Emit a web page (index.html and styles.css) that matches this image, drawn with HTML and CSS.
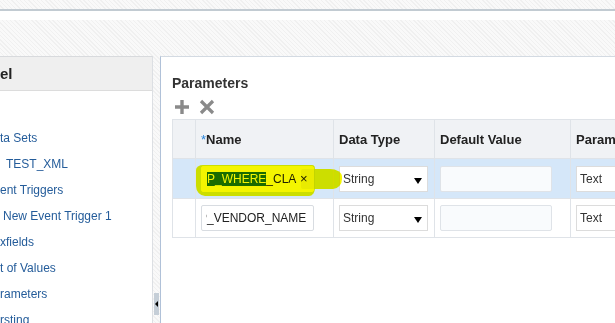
FILE: index.html
```html
<!DOCTYPE html>
<html>
<head lang="en">
    <meta charset="UTF-8">
    <title>Parameters</title>
    <link rel="stylesheet" href="styles.css">
</head>
<body>
<div class="top-bar"></div>
<div class="top-strip"></div>
<div class="main">
    <div class="left-panel">
        <div class="left-head">el</div>
        <ul class="tree">
            <li>ta Sets</li>
            <li class="in-2">TEST_XML</li>
            <li>ent Triggers</li>
            <li class="in-1">New Event Trigger 1</li>
            <li>xfields</li>
            <li>t of Values</li>
            <li>rameters</li>
            <li>rsting</li>
        </ul>
    </div>
    <div class="splitter">
        <span class="handle"><i class="arrow-left"></i></span>
    </div>
    <div class="right-panel">
        <h2 class="title">Parameters</h2>
        <div class="tools">
            <svg width="16" height="16" viewBox="0 0 16 16"><path d="M8 1v14M1 8h14" stroke="#8a8a8a" stroke-width="3.4" fill="none"/></svg>
            <svg width="16" height="16" viewBox="0 0 16 16"><path d="M2 2l12 12M14 2L2 14" stroke="#8a8a8a" stroke-width="3.2" fill="none"/></svg>
        </div>
        <div class="grid">
            <div class="hd"></div>
            <div class="hd"><span class="req">*</span>Name</div>
            <div class="hd">Data Type</div>
            <div class="hd">Default Value</div>
            <div class="hd">Parameter Type</div>

            <div class="cell sel"></div>
            <div class="cell sel mark-cell">
                <div class="field edit">
                    <span class="val"><span class="picked">P_WHERE</span>_CLA</span>
                    <span class="clear">×</span>
                </div>
                <div class="marker"></div>
                <div class="marker tail"></div>
            </div>
            <div class="cell sel"><div class="select">String<i class="arrow-down"></i></div></div>
            <div class="cell sel"><div class="field soft"></div></div>
            <div class="cell sel"><div class="select wide">Text</div></div>

            <div class="cell"></div>
            <div class="cell"><div class="field"><span class="clip"><span class="scroll-end">P_VENDOR_NAME</span></span></div></div>
            <div class="cell"><div class="select">String<i class="arrow-down"></i></div></div>
            <div class="cell"><div class="field soft"></div></div>
            <div class="cell"><div class="select wide">Text</div></div>
        </div>
    </div>
</div>
</body>
</html>
```

FILE: styles.css
```css
*{
    margin:0;
    padding:0;
    box-sizing: border-box;
}
ul{
    list-style: none;
}
body{
    width: 615px;
    height: 323px;
    overflow: hidden;
    background: #fff;
    font-family: "Liberation Sans", Arial, sans-serif;
    color: #333;
}
.top-bar{
    height: 11px;
    border-bottom: 2px solid #c2cbd2;
    background: repeating-linear-gradient(45deg, #f9f9f9 0 2px, #f0f0f0 2px 3px);
}
.top-strip{
    height: 9px;
    background: #fff;
}
.main{
    display: flex;
    height: 303px;
    padding-top: 36px;
    background: repeating-linear-gradient(45deg, #f9f9f9 0 2px, #f0f0f0 2px 3px);
}
.left-panel{
    width: 153px;
    flex: none;
    background: #fff;
    border-top: 1px solid #d8dadd;
    border-right: 1px solid #dcdfe3;
    overflow: hidden;
}
.left-head{
    height: 34px;
    background: #efefef;
    border-bottom: 1px solid #dcdcdc;
    font-size: 15px;
    font-weight: bold;
    line-height: 33px;
    color: #222;
}
.tree{
    padding-top: 34px;
}
.tree li{
    height: 26px;
    line-height: 26px;
    font-size: 12px;
    color: #245c9a;
    white-space: nowrap;
}
.tree .in-1{
    padding-left: 3px;
}
.tree .in-2{
    padding-left: 6px;
}
.splitter{
    width: 7px;
    flex: none;
    display: flex;
    flex-direction: column;
}
.handle{
    width: 5px;
    height: 22px;
    margin: 237px 0 0 1px;
    background: #c5ced7;
    display: flex;
    align-items: center;
}
.arrow-left{
    width: 0;
    height: 0;
    border-top: 3px solid transparent;
    border-bottom: 3px solid transparent;
    border-right: 3px solid #000;
    margin-left: 1px;
}
.right-panel{
    flex: 1;
    background: #fff;
    border-top: 1px solid #d3dae2;
    border-left: 1px solid #b0c1d8;
    padding: 18px 0 0 11px;
    overflow: hidden;
}
.title{
    font-size: 14px;
    line-height: 16px;
    font-weight: bold;
    color: #333;
}
.tools{
    height: 28px;
    padding: 4px 0 0 2px;
    display: flex;
    align-items: center;
    gap: 9px;
}
.tools svg{
    display: block;
}
.grid{
    display: grid;
    grid-template-columns: 23px 138px 101px 136px 130px;
    grid-template-rows: 39px 40px 39px;
    border-top: 1px solid #dfe3e8;
    border-left: 1px solid #dfe3e8;
    width: 528px;
}
.hd, .cell{
    border-right: 1px solid #dfe3e8;
    border-bottom: 1px solid #dfe3e8;
    display: flex;
    align-items: center;
    padding-left: 5px;
    white-space: nowrap;
}
.hd{
    background: #f0f2f5;
    font-size: 13px;
    font-weight: bold;
    color: #222;
}
.hd .req{
    color: #2a86dc;
    font-weight: normal;
}
.cell.sel{
    background: #d5e7f9;
}
.field{
    width: 113px;
    height: 26px;
    border: 1px solid #d8dce1;
    border-radius: 2px;
    background: #fff;
    font-size: 12px;
    display: flex;
    align-items: center;
    overflow: hidden;
    color: #222;
    padding-left: 4px;
}
.field.soft{
    width: 112px;
    background: #f9fbfd;
    border-color: #dfe3e8;
}
.clip{
    overflow: hidden;
    flex: 1;
    white-space: nowrap;
}
.field .scroll-end{
    display: inline-block;
    margin-left: -7px;
}
.field.edit{
    border-color: #fff;
    padding-left: 5px;
}
.val{
    width: 91px;
    overflow: hidden;
}
.picked{
    background: #1a6fd8;
    color: #fff;
    padding: 2px 0;
}
.clear{
    font-size: 13px;
    color: #222;
    margin-left: 2px;
}
.select{
    width: 89px;
    height: 26px;
    border: 1px solid #dcdcdc;
    background: #fff;
    font-size: 12px;
    color: #333;
    display: flex;
    align-items: center;
    padding-left: 3px;
    position: relative;
}
.select.wide{
    width: 110px;
}
.arrow-down{
    position: absolute;
    right: 5px;
    top: 11px;
    width: 0;
    height: 0;
    border-left: 4px solid transparent;
    border-right: 4px solid transparent;
    border-top: 6px solid #000;
}
.mark-cell{
    position: relative;
    overflow: visible;
}
.marker{
    position: absolute;
    left: 0;
    top: 6px;
    width: 119px;
    height: 31px;
    background: #f4f500;
    mix-blend-mode: multiply;
    border-radius: 7px 3px 6px 9px / 5px 4px 8px 10px;
    z-index: 2;
}
.marker.tail{
    left: 105px;
    top: 10px;
    width: 41px;
    height: 20px;
    border-radius: 2px 12px 9px 2px / 2px 8px 10px 2px;
}
```
